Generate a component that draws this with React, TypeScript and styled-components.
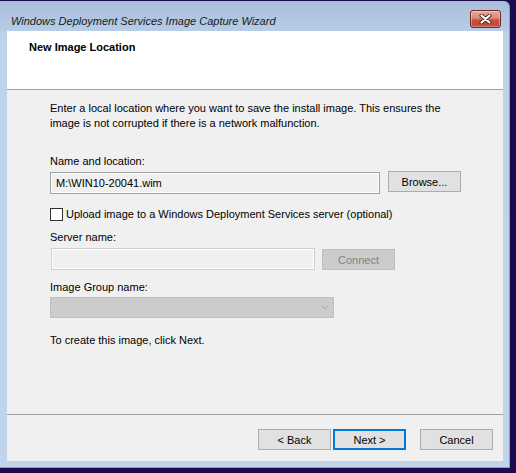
import styled, { createGlobalStyle } from 'styled-components';

const GlobalStyle = createGlobalStyle`
  html,
  body {
    margin: 0;
    padding: 0;
    background: #1c0b48;
  }
  body {
    font-family: 'Liberation Sans', Arial, sans-serif;
    font-size: 11px;
    color: #000;
  }
`;

const Desktop = styled.div`
  width: 516px;
  height: 473px;
  padding-top: 1px;
  box-sizing: border-box;
  overflow: hidden;
`;

const WindowFrame = styled.div`
  width: 496px;
  display: flex;
  flex-direction: column;
  padding: 0 6px 6px 7px;
  background: linear-gradient(180deg, #a7bed9 0px, #b6cce6 28px, #bdd3ec 34px, #bfd5ee 100%);
  border-right: 1px solid #33c3dc;
  border-bottom: 1px solid #33c3dc;
  border-top-right-radius: 6px;
`;

const TitleBar = styled.div`
  height: 30px;
  display: flex;
  align-items: flex-start;
  justify-content: space-between;
  padding: 9px 2px 0 4px;
  box-sizing: border-box;
`;

const TitleText = styled.span`
  margin-top: 3px;
  font-style: italic;
  font-size: 11px;
  line-height: 16px;
  color: #1a1a1a;
`;

const CloseButton = styled.div`
  width: 31px;
  height: 18px;
  box-sizing: border-box;
  border: 1px solid #6e2a24;
  border-radius: 3px;
  background: linear-gradient(180deg, #e4a99c 0%, #d88a7a 45%, #c9503c 55%, #c4473a 100%);
  display: flex;
  align-items: center;
  justify-content: center;
  box-shadow: inset 0 0 0 1px rgba(255, 255, 255, 0.35);
`;

const Client = styled.div`
  height: 430px;
  background: #f0f0f0;
  display: flex;
  flex-direction: column;
`;

const Header = styled.div`
  height: 59px;
  box-sizing: border-box;
  background: #fff;
  border-bottom: 1px solid #a0a0a0;
  padding: 9px 0 0 22px;
`;

const HeaderTitle = styled.div`
  font-weight: bold;
  line-height: 15px;
`;

const Body = styled.div`
  flex: 1;
  display: flex;
  flex-direction: column;
  align-items: flex-start;
  padding-left: 43px;
`;

const Text = styled.div<{ $top: number }>`
  margin-top: ${(p) => p.$top}px;
  line-height: 15px;
`;

const Row = styled.div<{ $top: number }>`
  margin-top: ${(p) => p.$top}px;
  display: flex;
  align-items: flex-start;
`;

const TextBox = styled.div<{ $width: number; $disabled?: boolean }>`
  width: ${(p) => p.$width}px;
  height: 22px;
  box-sizing: border-box;
  border: 1px solid ${(p) => (p.$disabled ? '#cfcfcf' : '#a0a0a0')};
  box-shadow: inset 0 0 0 1px #fff;
  background: #f0f0f0;
  padding-left: 5px;
  line-height: 20px;
`;

const Button = styled.div<{ $disabled?: boolean; $default?: boolean }>`
  width: 73px;
  height: 21px;
  box-sizing: border-box;
  display: flex;
  align-items: center;
  justify-content: center;
  background: ${(p) => (p.$disabled ? '#cccccc' : '#e1e1e1')};
  border: ${(p) =>
    p.$default ? '2px solid #0078d7' : p.$disabled ? '1px solid #bfbfbf' : '1px solid #adadad'};
  color: ${(p) => (p.$disabled ? '#838383' : '#000')};
`;

const CheckRow = styled.label`
  margin-top: 13px;
  display: flex;
  align-items: center;
  line-height: 15px;
`;

const CheckBox = styled.span`
  width: 13px;
  height: 13px;
  box-sizing: border-box;
  border: 1px solid #333;
  background: #fff;
  margin-right: 3px;
`;

const Combo = styled.div`
  margin-top: 2px;
  width: 284px;
  height: 21px;
  box-sizing: border-box;
  background: #cccccc;
  border: 1px solid #bfbfbf;
  display: flex;
  align-items: center;
  justify-content: flex-end;
  padding-right: 4px;
`;

const Footer = styled.div`
  border-top: 1px solid #a0a0a0;
  height: 47px;
  box-sizing: border-box;
  padding: 14px 10px 0 0;
  display: flex;
  justify-content: flex-end;
  gap: 2px;
`;

const CancelGap = styled.div`
  width: 10px;
`;

export default function App() {
  return (
    <>
      <GlobalStyle />
      <Desktop>
        <WindowFrame>
          <TitleBar>
            <TitleText>Windows Deployment Services Image Capture Wizard</TitleText>
            <CloseButton>
              <svg width="13" height="10" viewBox="0 0 13 10">
                <path d="M2.5 1.5 L10.5 8.5 M10.5 1.5 L2.5 8.5" stroke="#4a2420" strokeWidth="4" strokeLinecap="round" />
                <path d="M2.5 1.5 L10.5 8.5 M10.5 1.5 L2.5 8.5" stroke="#ffffff" strokeWidth="2.2" strokeLinecap="round" />
              </svg>
            </CloseButton>
          </TitleBar>
          <Client>
            <Header>
              <HeaderTitle>New Image Location</HeaderTitle>
            </Header>
            <Body>
              <Text $top={11}>
                Enter a local location where you want to save the install image. This ensures the
                <br />
                image is not corrupted if there is a network malfunction.
              </Text>
              <Text $top={23}>Name and location:</Text>
              <Row $top={2}>
                <TextBox $width={330} style={{ marginTop: 1 }}>
                  M:\WIN10-20041.wim
                </TextBox>
                <Button style={{ marginLeft: 8 }}>Browse...</Button>
              </Row>
              <CheckRow>
                <CheckBox />
                Upload image to a Windows Deployment Services server (optional)
              </CheckRow>
              <Text $top={8}>Server name:</Text>
              <Row $top={3}>
                <TextBox $width={264} $disabled style={{ marginLeft: 1 }} />
                <Button $disabled style={{ marginLeft: 7, marginTop: 1 }}>
                  Connect
                </Button>
              </Row>
              <Text $top={10}>Image Group name:</Text>
              <Combo>
                <svg width="8" height="5" viewBox="0 0 8 5">
                  <polyline points="0.5,0.5 4,4 7.5,0.5" fill="none" stroke="#a2a2a2" strokeWidth="1" />
                </svg>
              </Combo>
              <Text $top={15}>To create this image, click Next.</Text>
            </Body>
            <Footer>
              <Button>&lt; Back</Button>
              <Button $default>Next &gt;</Button>
              <CancelGap />
              <Button>Cancel</Button>
            </Footer>
          </Client>
        </WindowFrame>
      </Desktop>
    </>
  );
}
